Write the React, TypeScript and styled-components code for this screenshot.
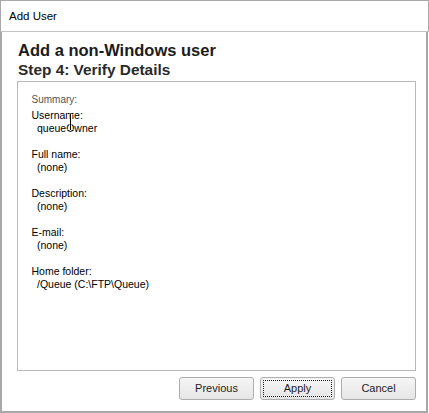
import React from "react";
import styled, { createGlobalStyle } from "styled-components";

const GlobalStyle = createGlobalStyle`
  html, body {
    margin: 0;
    padding: 0;
    background: #ffffff;
  }
  body {
    font-family: "Liberation Sans", Arial, sans-serif;
  }
`;

const Window = styled.div`
  width: 429px;
  height: 413px;
  display: flex;
  flex-direction: column;
  background: #ffffff;
  box-sizing: border-box;
`;

const TitleBar = styled.div`
  box-sizing: border-box;
  width: 429px;
  height: 32px;
  border: 1px solid #a9a9a9;
  border-bottom-color: #c4c4c4;
  padding-left: 8px;
  font-size: 11.5px;
  line-height: 30px;
  color: #000000;
  background: #ffffff;
`;

const Body = styled.div`
  box-sizing: border-box;
  width: 428px;
  flex: 1;
  border: 2px solid #a8a8a8;
  border-top: none;
  display: flex;
  flex-direction: column;
  padding: 9px 0 11px 0;
`;

const Heading = styled.div`
  font-weight: bold;
  font-size: 16.5px;
  line-height: 19px;
  color: #1c1c1c;
  padding-left: 16px;
`;

const Step = styled.div`
  font-weight: bold;
  font-size: 15.4px;
  line-height: 18px;
  color: #2a2a2a;
  padding-left: 16px;
  margin-top: 1px;
`;

const Panel = styled.div`
  position: relative;
  box-sizing: border-box;
  margin: 2px 10px 0 15px;
  height: 290px;
  border: 1px solid #b9b9b9;
  background: #ffffff;
  padding: 11px 0 0 13.5px;
  display: flex;
  flex-direction: column;
`;

const SummaryLabel = styled.div`
  font-size: 10px;
  line-height: 13px;
  color: #555555;
  margin-bottom: 3px;
`;

const Field = styled.div`
  display: flex;
  flex-direction: column;
  margin-bottom: 13px;
`;

const FieldLabel = styled.div`
  font-size: 10.5px;
  line-height: 13px;
  color: #000000;
`;

const FieldValue = styled.div`
  font-size: 10.5px;
  line-height: 13px;
  color: #000000;
  padding-left: 5.5px;
`;

const Cursor = styled.svg`
  position: absolute;
  left: 48px;
  top: 30px;
  pointer-events: none;
`;

const ButtonRow = styled.div`
  display: flex;
  justify-content: flex-end;
  gap: 6px;
  margin: 6px 10px 0 0;
`;

const Button = styled.button<{ $focused?: boolean }>`
  position: relative;
  box-sizing: border-box;
  width: 75px;
  height: 23px;
  margin: 0;
  padding: 0;
  border: 1px solid #adadad;
  border-radius: 3px;
  background: linear-gradient(#f5f5f5, #e6e6e6);
  font-family: "Liberation Sans", Arial, sans-serif;
  font-size: 11px;
  line-height: 21px;
  color: #1e1e1e;
  text-align: center;
  &::after {
    content: "";
    display: ${(p) => (p.$focused ? "block" : "none")};
    position: absolute;
    left: 2px;
    right: 2px;
    top: 2px;
    bottom: 2px;
    border: 1px dotted #202020;
  }
`;

const fields = [
  { label: "Username:", value: "queueOwner" },
  { label: "Full name:", value: "(none)" },
  { label: "Description:", value: "(none)" },
  { label: "E-mail:", value: "(none)" },
  { label: "Home folder:", value: "/Queue (C:\\FTP\\Queue)" },
];

export default function App() {
  return (
    <>
      <GlobalStyle />
      <Window>
        <TitleBar>Add User</TitleBar>
        <Body>
          <Heading>Add a non-Windows user</Heading>
          <Step>Step 4: Verify Details</Step>
          <Panel>
            <SummaryLabel>Summary:</SummaryLabel>
            {fields.map((f) => (
              <Field key={f.label}>
                <FieldLabel>{f.label}</FieldLabel>
                <FieldValue>{f.value}</FieldValue>
              </Field>
            ))}
            <Cursor width="9" height="20" viewBox="0 0 9 20">
              <path
                d="M1 1.5 H3.5 M5.5 1.5 H8 M4.5 2 V18 M1 18.5 H3.5 M5.5 18.5 H8"
                stroke="#ffffff"
                strokeWidth="2"
                fill="none"
              />
              <path
                d="M1.5 1.5 H3.5 M5.5 1.5 H7.5 M4.5 2 V18 M1.5 18.5 H3.5 M5.5 18.5 H7.5"
                stroke="#000000"
                strokeWidth="1"
                fill="none"
              />
            </Cursor>
          </Panel>
          <ButtonRow>
            <Button>Previous</Button>
            <Button $focused>Apply</Button>
            <Button>Cancel</Button>
          </ButtonRow>
        </Body>
      </Window>
    </>
  );
}
